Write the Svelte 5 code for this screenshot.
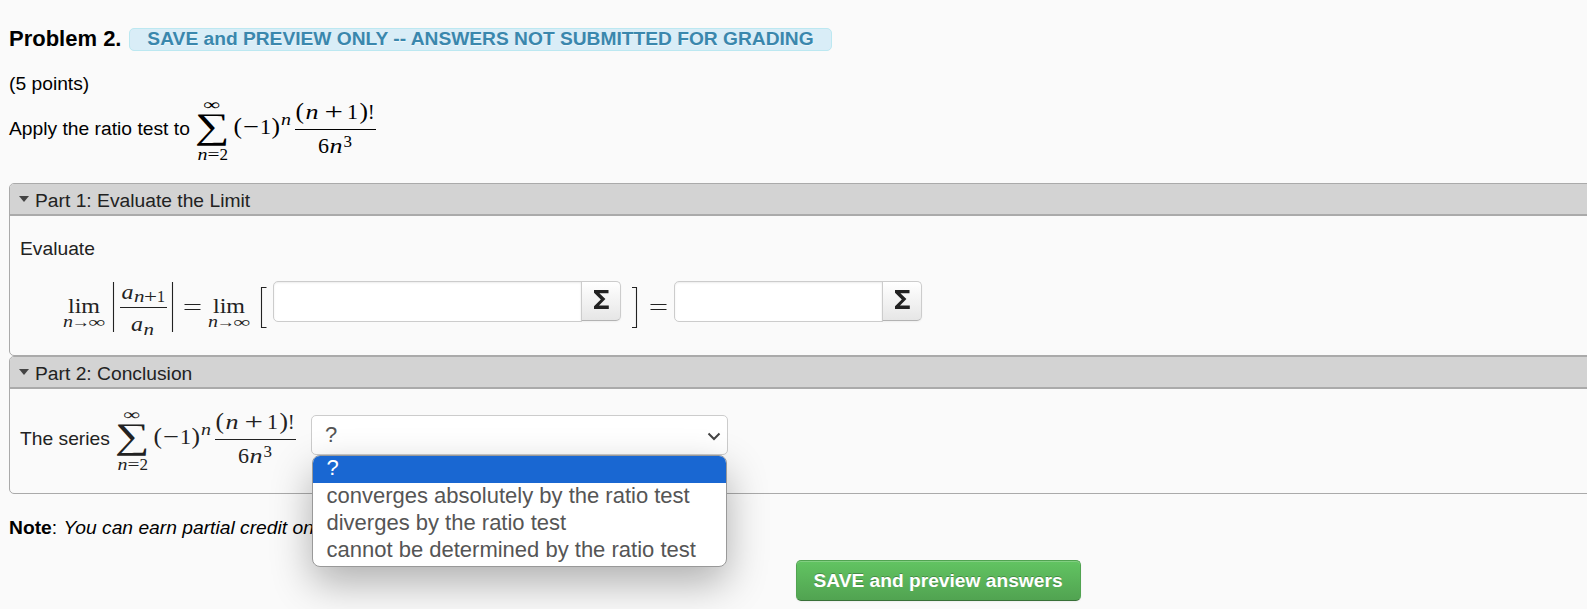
<script>
	const options = [
		'?',
		'converges absolutely by the ratio test',
		'diverges by the ratio test',
		'cannot be determined by the ratio test'
	];

	let selected = $state(0);
	let limitExpr = $state('');
	let limitValue = $state('');
</script>

{#snippet glyph(text, x, y, width, size, italic)}
	<text {x} {y} font-size={size} textLength={width} lengthAdjust="spacingAndGlyphs" class:italic>{text}</text>
{/snippet}

{#snippet series()}
	<svg class="math series" width="184" height="66" viewBox="0 0 184 66" role="img" aria-label="alternating series">
		{@render glyph('∞', 8.5, 12, 17, 16, false)}
		<text class="sum" transform="translate(-0.2 40.4) scale(1.52 1.12)" font-size="32">∑</text>
		{@render glyph('n', 2.5, 62, 10, 17, true)}
		{@render glyph('=', 12.5, 62, 12, 17, false)}
		{@render glyph('2', 24.5, 62, 8.5, 16, false)}

		{@render glyph('(', 38.5, 36, 8.5, 24, false)}
		{@render glyph('−', 48, 36, 16, 22, false)}
		{@render glyph('1', 65, 36, 11, 22, false)}
		{@render glyph(')', 76.5, 36, 8.5, 24, false)}
		{@render glyph('n', 86, 27, 10, 17, true)}

		<line x1="100" y1="31.5" x2="181" y2="31.5" />
		{@render glyph('(', 100.5, 21, 8.5, 24, false)}
		{@render glyph('n', 110.5, 21, 13, 22, true)}
		{@render glyph('+', 129.5, 21, 18.5, 24, false)}
		{@render glyph('1', 152, 21, 11, 22, false)}
		{@render glyph(')', 164.5, 21, 8.5, 24, false)}
		{@render glyph('!', 173, 21, 6.5, 22, false)}
		{@render glyph('6', 123, 55, 11, 22, false)}
		{@render glyph('n', 134.5, 55, 13, 22, true)}
		{@render glyph('3', 148.5, 49, 8.5, 16, false)}
	</svg>
{/snippet}

{#snippet limit(x)}
	{@render glyph('lim', x + 5, 31.5, 32, 22, false)}
	{@render glyph('n', x, 46, 10, 16, true)}
	{@render glyph('→', x + 8.5, 46, 18.5, 15, false)}
	{@render glyph('∞', x + 25.5, 46, 17, 15, false)}
{/snippet}

{#snippet sigmaButton()}
	<button class="sigma" type="button" aria-label="Equation editor">
		<svg width="15" height="19" viewBox="0 0 15 19">
			<path d="M0 0H14.5V3.2H5.4L11.4 9L5 15.6H14.8V19H0V16.2L6.8 9.4L0 2.8Z" />
		</svg>
	</button>
{/snippet}

<main>
	<header>
		<h1>Problem 2.</h1>
		<span class="badge">SAVE and PREVIEW ONLY -- ANSWERS NOT SUBMITTED FOR GRADING</span>
	</header>

	<p class="points">(5 points)</p>
	<div class="intro">
		<span>Apply the ratio test to</span>
		{@render series()}
	</div>

	<section class="panel first">
		<h2><i class="caret"></i>Part 1: Evaluate the Limit</h2>
		<div class="body">
			<p class="evaluate">Evaluate</p>
			<div class="equation">
				<svg class="math" width="210" height="52" viewBox="0 0 210 52" role="img" aria-label="limit of the ratio">
					{@render limit(0)}
					<path d="M50.5 1V51M109.5 1V51" />
					{@render glyph('a', 58.5, 17.5, 12, 22, true)}
					{@render glyph('n', 71, 21, 10.5, 17, true)}
					{@render glyph('+', 81, 21.5, 13, 18, false)}
					{@render glyph('1', 94, 21, 8, 16, false)}
					<line x1="57" y1="26.5" x2="104" y2="26.5" />
					{@render glyph('a', 68, 50, 12, 22, true)}
					{@render glyph('n', 80.5, 53.5, 10.5, 17, true)}
					<path d="M121.5 23.5H137.5M121.5 28.5H137.5" />
					{@render limit(145)}
					<path d="M203.5 6.5H198.5V46.5H203.5" />
				</svg>
				<div class="group wide">
					<input type="text" aria-label="answer 1" bind:value={limitExpr} />
					{@render sigmaButton()}
				</div>
				<svg class="math equals" width="53" height="52" viewBox="0 0 53 52" role="img" aria-label="equals">
					<path d="M11 6.5H15.5V46.5H11M29.5 23.5H45.5M29.5 28.5H45.5" />
				</svg>
				<div class="group">
					<input type="text" aria-label="answer 2" bind:value={limitValue} />
					{@render sigmaButton()}
				</div>
			</div>
		</div>
	</section>

	<section class="panel second">
		<h2><i class="caret"></i>Part 2: Conclusion</h2>
		<div class="body conclusion">
			<span>The series</span>
			{@render series()}
			<div class="dropdown">
				<button class="select" type="button">
					{options[selected]}
					<svg width="14" height="9" viewBox="0 0 14 9">
						<path d="M1.5 1.5L7 7L12.5 1.5" />
					</svg>
				</button>
				<ul class="menu">
					{#each options as option, i}
						<li class:active={i === selected}>
							<button type="button" onclick={() => (selected = i)}>{option}</button>
						</li>
					{/each}
				</ul>
			</div>
		</div>
	</section>

	<p class="note"><b>Note</b>: <em>You can earn partial credit on</em></p>

	<div class="actions">
		<button class="save" type="button">SAVE and preview answers</button>
	</div>
</main>

<style>
	:global(body) {
		background: #fafafa;
		overflow: hidden;
	}

	main {
		box-sizing: border-box;
		height: 609px;
		padding: 28px 0 0 9px;
		overflow: hidden;
		font-family: 'Liberation Sans', Arial, sans-serif;
		font-size: 19.25px;
		line-height: 24px;
		color: #000;
	}

	h1,
	h2,
	p,
	ul {
		margin: 0;
		padding: 0;
	}

	header {
		display: flex;
		height: 24px;
		gap: 8px;
	}

	h1 {
		width: 112px;
		font-size: 22px;
		line-height: 22px;
		white-space: nowrap;
	}

	.badge {
		box-sizing: border-box;
		width: 703px;
		height: 23px;
		border: 1px solid #bce8f1;
		border-radius: 5px;
		background: #d9edf7;
		color: #3a87ad;
		font-weight: bold;
		line-height: 20px;
		font-size: 19.2px;
		text-align: center;
		text-shadow: 0 1px 0 rgba(255, 255, 255, 0.5);
		white-space: nowrap;
	}

	.points {
		margin-top: 20px;
	}

	.intro {
		display: flex;
		height: 66px;
		margin-top: 2px;
	}

	.intro span {
		width: 186px;
		padding-top: 19px;
		white-space: nowrap;
	}

	.math {
		display: block;
		flex: none;
		overflow: visible;
		font-family: 'Liberation Serif', 'Times New Roman', serif;
		fill: currentColor;
	}

	.math line,
	.math path {
		fill: none;
		stroke: currentColor;
		stroke-width: 1.1;
	}

	.italic {
		font-style: italic;
	}

	.panel {
		box-sizing: border-box;
		margin-right: -20px;
		border: 1px solid #aaa;
		border-radius: 5px;
		color: #222;
	}

	.first {
		height: 173px;
		margin-top: 19px;
	}

	.second {
		height: 138px;
	}

	h2 {
		display: flex;
		align-items: center;
		box-sizing: border-box;
		height: 32px;
		border-bottom: 2px solid #aaa;
		border-radius: 4px 4px 0 0;
		padding: 4px 0 0 9px;
		background: #d3d3d3;
		font-size: 19.25px;
		font-weight: normal;
	}

	.caret {
		width: 0;
		margin: -5px 6px 0 0;
		border: 5px solid transparent;
		border-top: 6px solid #444;
		border-bottom: 0;
	}

	.body {
		padding-left: 10px;
	}

	.evaluate {
		padding-top: 21px;
	}

	.equation {
		display: flex;
		margin: 20px 0 0 43px;
	}

	.group {
		display: flex;
		width: 248px;
		height: 41px;
	}

	.group.wide {
		width: 348px;
	}

	.group input {
		box-sizing: border-box;
		flex: 1;
		min-width: 0;
		border: 1px solid #ccc;
		border-radius: 5px 0 0 5px;
		background: #fff;
		box-shadow: inset 0 1px 2px rgba(0, 0, 0, 0.08);
	}

	.sigma {
		display: flex;
		justify-content: center;
		box-sizing: border-box;
		width: 40px;
		height: 40px;
		margin-left: -1px;
		border: 1px solid #ccc;
		border-bottom-color: #b3b3b3;
		border-radius: 0 5px 5px 0;
		padding: 8px 0 0 1px;
		background: linear-gradient(#fff, #e6e6e6);
		box-shadow: 0 1px 2px rgba(0, 0, 0, 0.05);
	}

	.sigma path {
		fill: #222;
	}

	.conclusion {
		display: flex;
		padding-top: 19px;
	}

	.conclusion span {
		width: 95px;
		padding-top: 19px;
		white-space: nowrap;
	}

	.dropdown {
		position: relative;
		width: 417px;
		margin: 7px 0 0 12px;
	}

	.select {
		display: flex;
		align-items: center;
		justify-content: space-between;
		box-sizing: border-box;
		width: 100%;
		height: 40px;
		border: 1px solid #ccc;
		border-radius: 5px;
		padding: 0 6px 0 13px;
		background: #fff;
		font: 22px 'Liberation Sans', Arial, sans-serif;
		color: #555;
	}

	.select svg {
		margin-top: 2px;
	}

	.select path {
		fill: none;
		stroke: #444;
		stroke-width: 2;
	}

	.menu {
		position: absolute;
		top: 40px;
		left: 1px;
		box-sizing: border-box;
		width: 415px;
		height: 112px;
		overflow: hidden;
		border: 1px solid #999;
		border-radius: 8px;
		background: #fff;
		box-shadow: 0 16px 40px rgba(0, 0, 0, 0.3);
		list-style: none;
	}

	.menu li {
		height: 27.4px;
	}

	.menu button {
		display: block;
		width: 100%;
		height: 100%;
		border: 0;
		padding: 0 0 3px 13.5px;
		background: none;
		font: 22px/24px 'Liberation Sans', Arial, sans-serif;
		color: #555;
		text-align: left;
		white-space: nowrap;
	}

	.menu .active {
		background: #1967d2;
	}

	.menu .active button {
		color: #fff;
	}

	.note {
		margin-top: 22px;
	}

	.note em {
		margin-left: 1px;
	}

	.actions {
		display: flex;
		justify-content: center;
		margin: 20px 0 0 280px;
	}

	.save {
		box-sizing: border-box;
		width: 285px;
		height: 41px;
		border: 1px solid #51a351;
		border-bottom-color: #387038;
		border-radius: 5px;
		background: linear-gradient(#62c462, #51a351);
		box-shadow: inset 0 1px 0 rgba(255, 255, 255, 0.2), 0 1px 2px rgba(0, 0, 0, 0.05);
		font: bold 19.2px 'Liberation Sans', Arial, sans-serif;
		color: #fff;
		text-shadow: 0 -1px 0 rgba(0, 0, 0, 0.25);
	}
</style>
